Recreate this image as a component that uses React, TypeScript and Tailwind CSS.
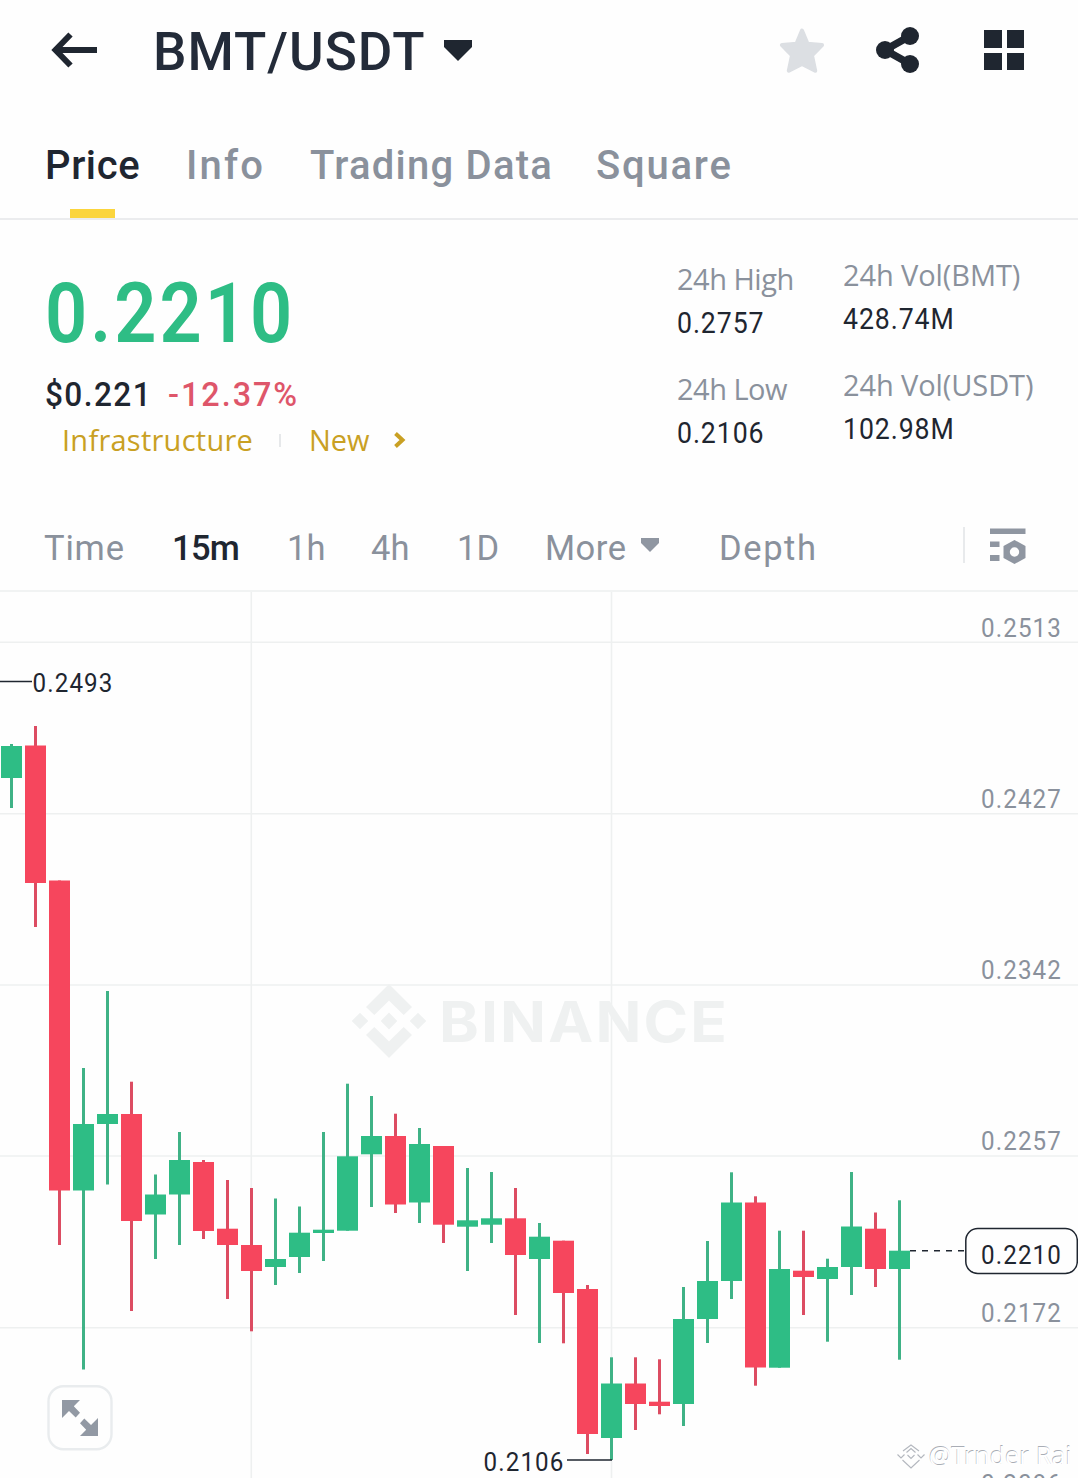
import React from "react";

type Candle = {
  up: boolean;
  top: number;
  bottom: number;
  high: number;
  low: number;
};

const c = (up: boolean, top: number, bottom: number, high: number, low: number): Candle => ({ up, top, bottom, high, low });

// One entry per 15m candle, y values in chart units
const CANDLES: Candle[] = [
  c(true, 746, 778, 744, 808),
  c(false, 745.5, 883, 726, 927),
  c(false, 880.5, 1190.5, 880.5, 1245),
  c(true, 1124, 1190.5, 1068, 1369.5),
  c(true, 1114, 1124, 991, 1184.5),
  c(false, 1114, 1221, 1081.7, 1311),
  c(true, 1194.5, 1214.5, 1174.5, 1259),
  c(true, 1160, 1194.5, 1132, 1245),
  c(false, 1162, 1231, 1160, 1239),
  c(false, 1228.7, 1245, 1180, 1299),
  c(false, 1245, 1271, 1188, 1331.3),
  c(true, 1259, 1267, 1198.5, 1285),
  c(true, 1232.7, 1257, 1206.5, 1273),
  c(true, 1229.7, 1233, 1132, 1261),
  c(true, 1156.3, 1230.7, 1083.7, 1230.7),
  c(true, 1136, 1154.3, 1096, 1207),
  c(false, 1136, 1204.5, 1113.7, 1213),
  c(true, 1144, 1202.5, 1128, 1223),
  c(false, 1146, 1224.7, 1146, 1243),
  c(true, 1220.3, 1226.7, 1168, 1271),
  c(true, 1218.3, 1224.7, 1172, 1243),
  c(false, 1218.3, 1255, 1188, 1315),
  c(true, 1236.7, 1259, 1223, 1343),
  c(false, 1240.7, 1293, 1240.7, 1343.3),
  c(false, 1289, 1434, 1285, 1454),
  c(true, 1383.5, 1438, 1357.3, 1460),
  c(false, 1383.5, 1404, 1357.3, 1430),
  c(false, 1401.7, 1406, 1359.3, 1414.3),
  c(true, 1319, 1404, 1287, 1426),
  c(true, 1281, 1319, 1241, 1343),
  c(true, 1202.5, 1281, 1172.3, 1299),
  c(false, 1202.5, 1367.5, 1196.3, 1385.7),
  c(true, 1269, 1367.7, 1230.7, 1367.7),
  c(false, 1270.7, 1277, 1230.7, 1315),
  c(true, 1267, 1279, 1258.7, 1341.7),
  c(true, 1226.5, 1267, 1172, 1295),
  c(false, 1228.7, 1269, 1212.5, 1287),
  c(true, 1250.7, 1269, 1200.3, 1359.7),
];

const AXIS = [
  { y: 642.3, label: "0.2513" },
  { y: 813.7, label: "0.2427" },
  { y: 985, label: "0.2342" },
  { y: 1156, label: "0.2257" },
  { y: 1327.7, label: "0.2172" },
  { y: 1499, label: "0.2086" },
];

export default function App() {
  return (
    <div className="relative w-[1078px] h-[1478px] overflow-hidden bg-[#fefefe] font-['Open_Sans',sans-serif] text-[#1f2630]">
      <Header />
      <Tabs />
      <Stats />
      <Timeframes />
      <Chart />
      <Watermark />
    </div>
  );
}

function Header() {
  return (
    <header className="flex h-[100px] items-center justify-between pl-[51px] pr-[54px]">
      <div className="flex items-center">
        <svg className="h-9 w-[46px]" viewBox="0 0 46 36" fill="none" stroke="#1f2630" strokeWidth="6">
          <path d="M4 18H46M19.5 2.5L4.5 18L19.5 33.5" />
        </svg>
        <h1 className="ml-[56px] w-[291px] pt-[4px] whitespace-nowrap font-['Roboto',sans-serif] text-[53px] leading-[60px] font-medium tracking-[1px] text-[#232b39]">
          BMT/USDT
        </h1>
        <svg className="h-[21px] w-7" viewBox="0 0 28 21" fill="#1f2630">
          <path d="M0 0H28V7L14 21L0 7Z" />
        </svg>
      </div>
      <div className="flex items-center">
        <svg className="h-[46px] w-[46px]" viewBox="0 0 46 46" fill="#dcdfe3" stroke="#dcdfe3" strokeWidth="4" strokeLinejoin="round">
          <path d="M23 3.5L28.5 16.8L43 18L33 28.3L36.2 43.7L23 37L9.8 43.7L13 28.3L3 18L17.5 16.8Z" />
        </svg>
        <svg className="ml-[51px] h-[46px] w-[44px]" viewBox="0 0 44 46" fill="#1f2630">
          <path d="M9 23L34 9M9 23L34 37" stroke="#1f2630" strokeWidth="7.5" />
          <circle cx="9" cy="23" r="9" />
          <circle cx="34" cy="9" r="9" />
          <circle cx="34" cy="37" r="9" />
        </svg>
        <div className="ml-[64px] grid grid-cols-2 gap-[5px]">
          <i className="h-[17.5px] w-[17.5px] bg-[#1f2630]" />
          <i className="h-[17.5px] w-[17.5px] bg-[#1f2630]" />
          <i className="h-[17.5px] w-[17.5px] bg-[#1f2630]" />
          <i className="h-[17.5px] w-[17.5px] bg-[#1f2630]" />
        </div>
      </div>
    </header>
  );
}

function Tabs() {
  return (
    <nav className="flex h-[120px] items-center whitespace-nowrap border-b-2 border-[#ebecee] pl-[45px] pt-[13px] font-['Roboto',sans-serif] text-[40px] leading-[48px] font-medium text-[#8a919c]">
      <div className="relative flex h-full w-[141px] items-center tracking-[0.6px] text-[#1f2630]">
        Price
        <span className="absolute bottom-0 left-[25px] h-[9px] w-[45px] bg-[#fbd53d]" />
      </div>
      <div className="w-[124px] tracking-[2.2px]">Info</div>
      <div className="w-[286px] tracking-[1.25px]">Trading Data</div>
      <div className="tracking-[1.8px]">Square</div>
    </nav>
  );
}

function Stats() {
  return (
    <section className="flex h-[285px] whitespace-nowrap">
      <div className="w-[632px] pl-[45px] pt-[52px]">
        <div className="origin-left scale-x-[0.88] font-['Roboto',sans-serif] text-[84px] leading-[84px] font-semibold tracking-[3.4px] text-[#2ebd85]">
          0.2210
        </div>
        <div className="mt-[18px] flex font-['Roboto',sans-serif] text-[34px] leading-[40px] font-medium">
          <span className="w-[123px] origin-left scale-x-[0.93] tracking-[1.5px]">$0.221</span>
          <span className="origin-left scale-x-[0.95] tracking-[2.1px] text-[#de566a]">-12.37%</span>
        </div>
        <div className="mt-[8px] flex items-center pl-[17px] text-[29px] leading-[36px] text-[#c9a023]">
          <span className="w-[217px] tracking-[0.25px]">Infrastructure</span>
          <span className="h-[13px] w-[2px] bg-[#e6e8ea]" />
          <span className="ml-[28px] w-[85px]">New</span>
          <svg className="h-4 w-3" viewBox="0 0 12 16" fill="none" stroke="#c9a023" strokeWidth="4">
            <path d="M1.5 1.5L8.5 8L1.5 14.5" />
          </svg>
        </div>
      </div>
      <div className="w-[166px] pl-[45px] pt-[37px] tracking-[-0.5px]">
        <Stat label="24h High" value="0.2757" />
        <Stat label="24h Low" value="0.2106" />
      </div>
      <div className="pl-[45px] pt-[33px] tracking-[-0.1px]">
        <Stat label="24h Vol(BMT)" value="428.74M" />
        <Stat label="24h Vol(USDT)" value="102.98M" />
      </div>
    </section>
  );
}

function Stat({ label, value }: { label: string; value: string }) {
  return (
    <div className="mb-[21.5px] leading-[44px]">
      <div className="text-[29px] text-[#8a919c]">{label}</div>
      <div className="origin-left scale-x-[0.92] font-['Roboto',sans-serif] text-[29px] tracking-[1px]">{value}</div>
    </div>
  );
}

function Timeframes() {
  return (
    <div className="flex h-[87px] items-center whitespace-nowrap border-b-2 border-[#f1f3f3] pl-[44px] pt-[2px] font-['Roboto',sans-serif] text-[34.5px] text-[#8a919c]">
      <span className="w-[128px] tracking-[0.8px]">Time</span>
      <span className="w-[115px] font-medium tracking-[-0.7px] text-[#1f2630]">15m</span>
      <span className="w-[84px]">1h</span>
      <span className="w-[86px]">4h</span>
      <span className="w-[88px]">1D</span>
      <span className="w-[96px] tracking-[0.5px]">More</span>
      <svg className="-mt-2 h-[14px] w-[18px]" viewBox="0 0 18 14" fill="#8f96a1">
        <path d="M0 0H18V5L9 14L0 5Z" />
      </svg>
      <span className="ml-[60px] w-[244px] tracking-[1.6px]">Depth</span>
      <span className="-mt-2 h-9 w-[2px] bg-[#e8eaec]" />
      <svg className="-mt-1.5 ml-[24.5px] h-9 w-9" viewBox="0 0 36 36" fill="#8f96a1">
        <path d="M0 0.5H35.5V6H0ZM0 13.5H9.5V19H0ZM0 27H9.5V33H0Z" />
        <path fillRule="evenodd" d="M24.5 12L35.5 18V30L24.5 36L13.5 30V18ZM24.5 19.3A4.7 4.7 0 1 0 24.5 28.7A4.7 4.7 0 1 0 24.5 19.3Z" />
      </svg>
    </div>
  );
}

function PriceLabel({ x, y, children }: { x: number; y: number; children: string }) {
  return (
    <text transform={`translate(${x} ${y}) scale(0.93 1)`} letterSpacing="1.2">
      {children}
    </text>
  );
}

function Chart() {
  return (
    <svg className="block h-[886px] w-[1078px] font-['Roboto',sans-serif]" viewBox="0 592 1078 886" fontSize="26">
      {/* Grid */}
      <g stroke="#eef0f0" strokeWidth="1.6">
        {AXIS.map((a) => (
          <path key={a.label} d={`M0 ${a.y}H1078`} />
        ))}
        <path d="M251.3 592V1478M611.5 592V1478" />
      </g>

      {/* Brand */}
      <g fill="#eff1f1">
        <path d="M389 984L412 1007L403.7 1015L389 1000.5L374.3 1015L366 1007Z" />
        <path d="M389 1058L412 1035L403.7 1027L389 1041.5L374.3 1027L366 1035Z" />
        <path d="M389 1012.5L397.3 1021L389 1029.5L380.7 1021Z" />
        <path d="M360 1012.7L368.3 1021L360 1029.3L351.7 1021Z" />
        <path d="M418 1012.7L426.3 1021L418 1029.3L409.7 1021Z" />
        <text x="439" y="1041.7" fontSize="56" fontWeight="700" textLength="290" lengthAdjust="spacingAndGlyphs" letterSpacing="2" className="font-['Inter',sans-serif]">
          BINANCE
        </text>
      </g>

      {/* Candles */}
      {CANDLES.map((k, i) => (
        <g key={i}>
          <rect x={10 + i * 24} y={k.high} width="3" height={k.low - k.high} fill={k.up ? "#3fb286" : "#dc4c62"} />
          <rect x={1 + i * 24} y={k.top} width="21" height={k.bottom - k.top} fill={k.up ? "#2ebd85" : "#f6465d"} />
        </g>
      ))}

      {/* Price axis */}
      <g fill="#8a919c">
        {AXIS.map((a) => (
          <PriceLabel key={a.label} x={981} y={a.y - 5.6}>
            {a.label}
          </PriceLabel>
        ))}
      </g>

      {/* High and low markers */}
      <g fill="#1f2630">
        <path d="M0 681.5H32M567 1460H612" stroke="#1f2630" strokeWidth="1.6" />
        <PriceLabel x={32.5} y={692}>0.2493</PriceLabel>
        <PriceLabel x={483.5} y={1471}>0.2106</PriceLabel>
      </g>

      {/* Last price */}
      <path d="M910 1250.7H965" stroke="#1f2630" strokeWidth="1.6" strokeDasharray="6 6" />
      <rect x="965.8" y="1228.5" width="111.5" height="45" rx="12" fill="#fefefe" stroke="#1f2630" strokeWidth="1.5" />
      <g fill="#1f2630">
        <PriceLabel x={981} y={1264}>0.2210</PriceLabel>
      </g>

      {/* Full screen button */}
      <rect x="48.5" y="1386.3" width="63" height="63" rx="15" fill="#fefefe" stroke="#e9ecee" strokeWidth="2.4" />
      <path
        d="M62 1400H80L73.8 1406.2L80 1412.8L75.7 1417.6L69 1411L62 1418ZM98 1436H80L86.2 1429.8L80 1423.2L84.3 1418.4L91 1425L98 1418Z"
        fill="#9299a4"
      />
    </svg>
  );
}

function Watermark() {
  return (
    <div className="absolute right-[6px] bottom-[6px] flex items-center gap-1 whitespace-nowrap font-['Noto_Sans',sans-serif] text-[25px] leading-[34px] text-white [text-shadow:-0.5px_-0.8px_0.5px_#a9adb5]">
      <svg className="mt-1 h-7 w-7" viewBox="0 0 28 28" fill="none" stroke="#b3b7be" strokeWidth="1.1">
        <path d="M6 8L14 2L22 8M9.5 9.5L14 5.5L18.5 9.5M0.5 11.5L4 15L7.5 11.5M20.5 11.5L24 15L27.5 11.5M10.5 12L14 15.5L17.5 12M5.5 17L14 25L22.5 17" />
      </svg>
      @Trnder Rai
    </div>
  );
}
